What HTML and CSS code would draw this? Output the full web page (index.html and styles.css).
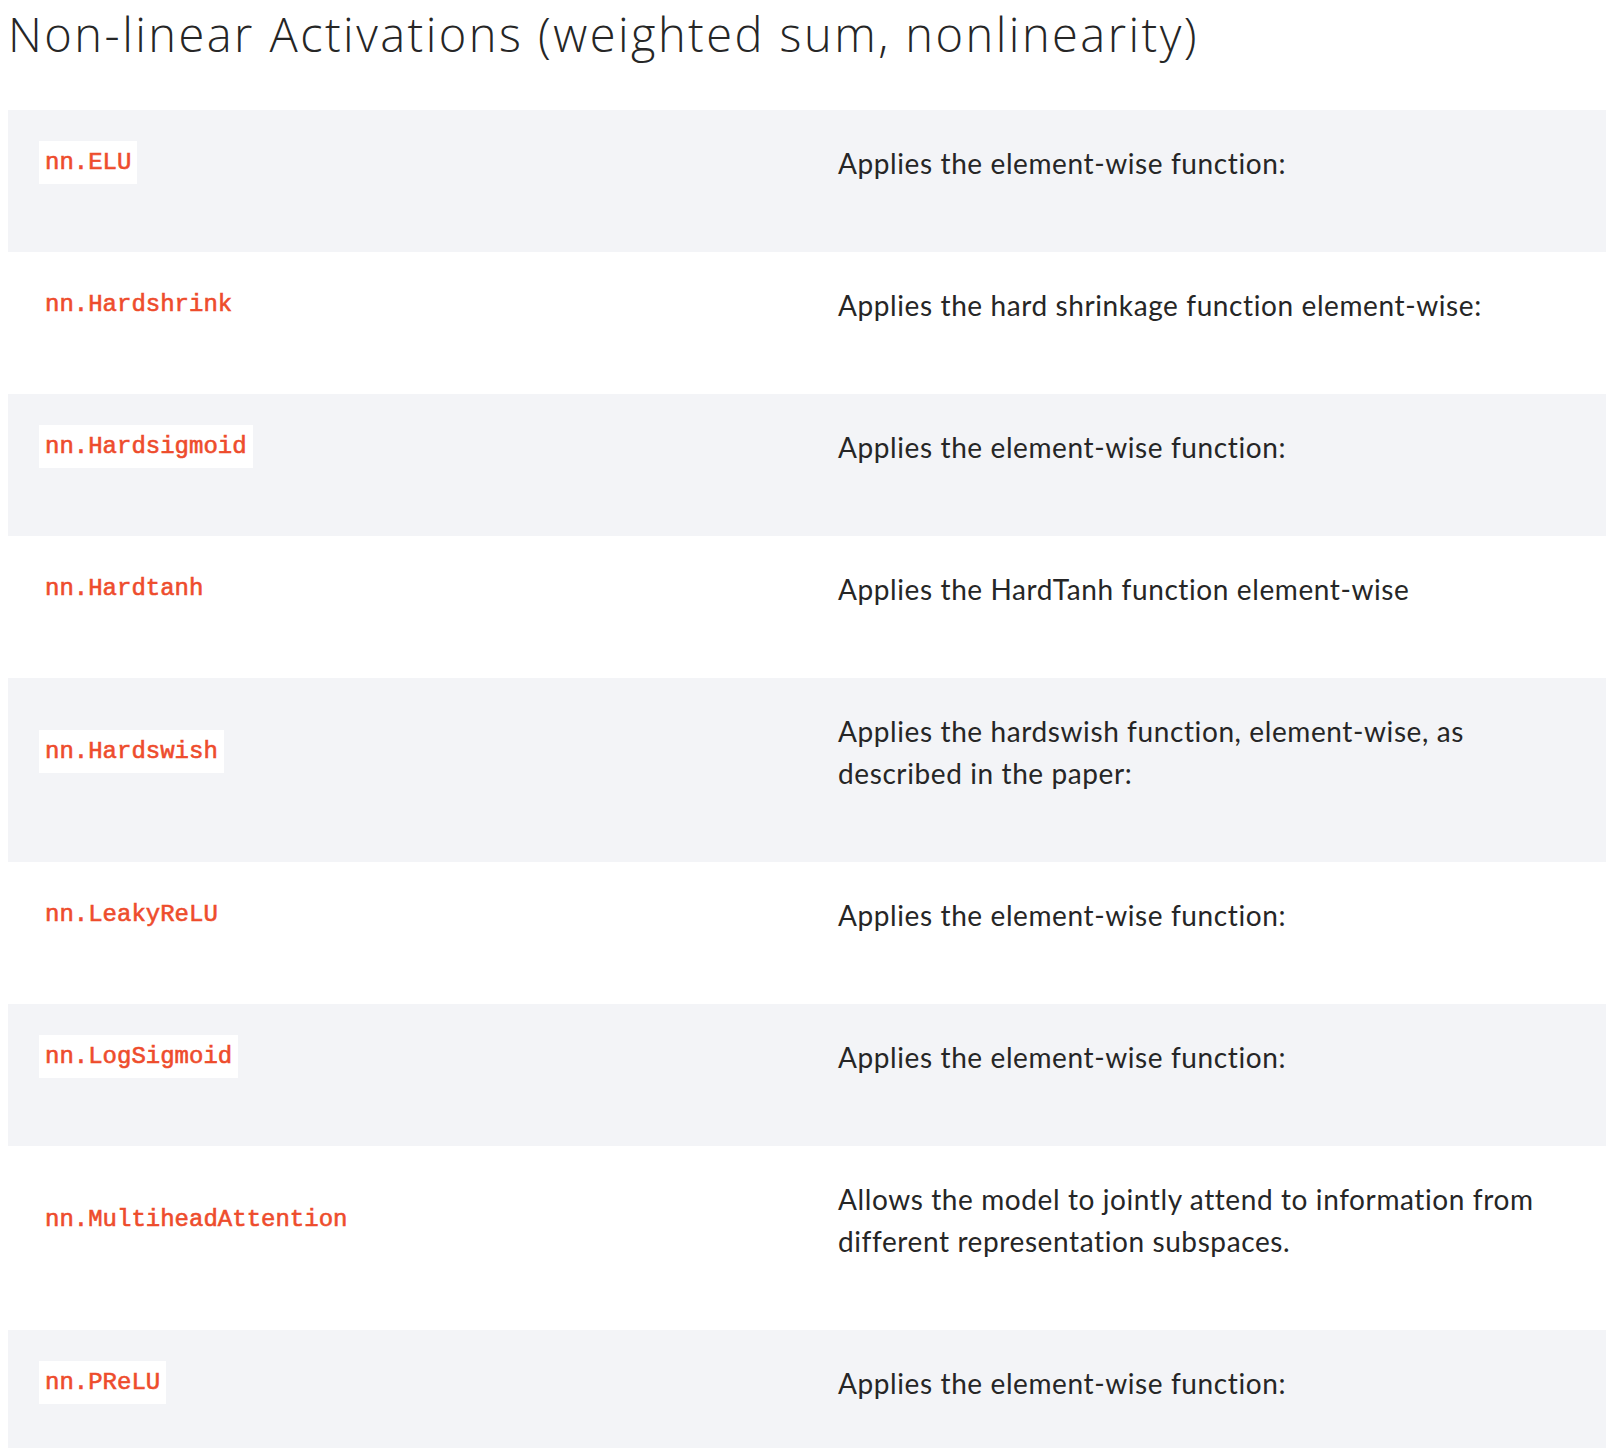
FILE: index.html
```html
<!DOCTYPE html>
<html lang="en">
<head>
<meta charset="utf-8">
<title>Non-linear Activations</title>
<link rel="stylesheet" href="styles.css">
</head>
<body>
<div class="page">
  <h1 class="title">Non-linear Activations (weighted sum, nonlinearity)</h1>
  <div class="table">
    <div class="row odd">
      <div class="cell name"><code class="code">nn.ELU</code></div>
      <div class="cell desc"><p>Applies the element-wise function:</p></div>
    </div>
    <div class="row even">
      <div class="cell name"><code class="code">nn.Hardshrink</code></div>
      <div class="cell desc"><p>Applies the hard shrinkage function element-wise:</p></div>
    </div>
    <div class="row odd">
      <div class="cell name"><code class="code">nn.Hardsigmoid</code></div>
      <div class="cell desc"><p>Applies the element-wise function:</p></div>
    </div>
    <div class="row even">
      <div class="cell name"><code class="code">nn.Hardtanh</code></div>
      <div class="cell desc"><p>Applies the HardTanh function element-wise</p></div>
    </div>
    <div class="row odd">
      <div class="cell name"><code class="code">nn.Hardswish</code></div>
      <div class="cell desc"><p>Applies the hardswish function, element-wise, as described in the paper:</p></div>
    </div>
    <div class="row even">
      <div class="cell name"><code class="code">nn.LeakyReLU</code></div>
      <div class="cell desc"><p>Applies the element-wise function:</p></div>
    </div>
    <div class="row odd">
      <div class="cell name"><code class="code">nn.LogSigmoid</code></div>
      <div class="cell desc"><p>Applies the element-wise function:</p></div>
    </div>
    <div class="row even">
      <div class="cell name"><code class="code">nn.MultiheadAttention</code></div>
      <div class="cell desc"><p>Allows the model to jointly attend to information from different representation subspaces.</p></div>
    </div>
    <div class="row odd">
      <div class="cell name"><code class="code">nn.PReLU</code></div>
      <div class="cell desc"><p>Applies the element-wise function:</p></div>
    </div>
  </div>
</div>
</body>
</html>
```
FILE: styles.css
```css
html, body {
  margin: 0;
  padding: 0;
  background: #ffffff;
  overflow: hidden;
}

.page {
  padding-left: 8px;
  color: #262626;
  font-family: "Lato", "Open Sans", sans-serif;
}

.title {
  margin: 4px 0 0 0;
  font-family: "Open Sans", "Lato", sans-serif;
  font-size: 47px;
  line-height: 60px;
  font-weight: 350;
  letter-spacing: 2.45px;
  color: #262626;
}

.table {
  margin-top: 46px;
  display: flex;
  flex-direction: column;
}

.row {
  display: grid;
  grid-template-columns: 1fr 1fr;
  align-items: center;
  padding: 31.5px 0 68.5px 0;
}

.row.odd {
  background: #f3f4f7;
}

.row.even {
  background: #ffffff;
}

.cell {
  padding: 0 31px;
}

.name {
  display: flex;
  align-items: center;
}

.desc p {
  margin: 0;
  font-size: 28px;
  line-height: 42px;
  letter-spacing: 0.6px;
  color: #262626;
}

.code {
  display: block;
  margin: -0.5px 0;
  background: #ffffff;
  color: #ee4c2c;
  font-family: "Liberation Mono", "DejaVu Sans Mono", monospace;
  font-weight: 400;
  -webkit-text-stroke: 0.6px #ee4c2c;
  font-size: 24px;
  line-height: 33px;
  padding: 5px 6px;
}
```
